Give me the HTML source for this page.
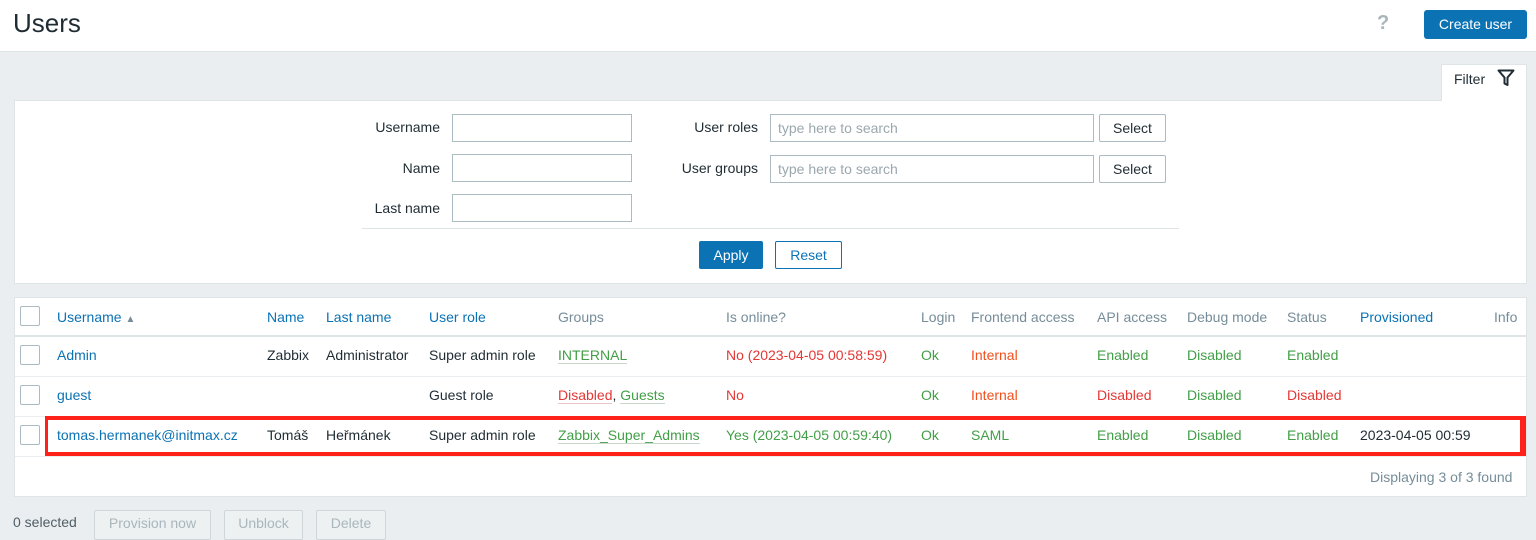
<!DOCTYPE html>
<html><head><meta charset="utf-8"><style>
*{box-sizing:border-box;margin:0;padding:0}
body{width:1536px;height:534px;background:#ebeef0;font-family:"Liberation Sans",sans-serif;font-size:14px;color:#1f2c33;position:relative;overflow:hidden}
.a{position:absolute;white-space:nowrap}
.hdr{left:0;top:0;width:1536px;height:52px;background:#fff;border-bottom:1px solid #dfe4e7}
.box{background:#fff;border:1px solid #dfe4e7}
.inp{background:#fff;border:1px solid #acbbc2;height:28px}
.ph{color:#9aa7ad;font-size:14px;line-height:26px;padding-left:7px}
.btn{border:1px solid #acbbc2;background:#fff;text-align:center;line-height:26px;height:28px;border-radius:2px}
.blue{color:#0b72b4}.gr{color:#429e47}.rd{color:#e33734}.gy{color:#768d99}
.cb{width:20px;height:20px;border:1px solid #acbbc2;border-radius:2px;background:#fff}
.ln{height:1px;background:#ebeef0}
.u{border-bottom:1px solid #c9d7cc}
.ur{border-bottom:1px solid #e8c8c8}
.lbl{text-align:right;width:120px}
.dis{border:1px solid #cfd6da;color:#a9b6bc;background:#eef1f2;height:26px;line-height:24px;text-align:center;border-radius:2px}
</style></head><body>
<div class="a hdr"></div>
<div class="a" style="left:13px;top:8px;font-size:26px;color:#1f2c33">Users</div>
<div class="a" style="left:1377px;top:12px;font-size:20px;color:#a9b6bc;font-weight:bold">?</div>
<div class="a" style="left:1424px;top:10px;width:103px;height:29px;background:#0b72b4;color:#fff;border-radius:3px;text-align:center;line-height:29px;font-size:14px">Create user</div>

<div class="a box" style="left:1441px;top:64px;width:86px;height:38px;border-bottom:none"></div>
<div class="a" style="left:1454px;top:71px;font-size:14px">Filter</div>
<svg class="a" style="left:1497px;top:69px" width="18" height="18" viewBox="0 0 18 18"><path d="M1.5 1.5h15l-6 7v7.5l-3-1.5v-6z" fill="none" stroke="#1f2c33" stroke-width="2" stroke-linejoin="round"/></svg>

<div class="a box" style="left:14px;top:100px;width:1513px;height:184px"></div>
<div class="a" style="left:1442px;top:100px;width:84px;height:2px;background:#fff"></div>
<div class="a lbl" style="left:320px;top:119px">Username</div>
<div class="a lbl" style="left:320px;top:160px">Name</div>
<div class="a lbl" style="left:320px;top:200px">Last name</div>
<div class="a inp" style="left:452px;top:114px;width:180px"></div>
<div class="a inp" style="left:452px;top:154px;width:180px"></div>
<div class="a inp" style="left:452px;top:194px;width:180px"></div>
<div class="a lbl" style="left:638px;top:119px">User roles</div>
<div class="a lbl" style="left:638px;top:160px">User groups</div>
<div class="a inp ph" style="left:770px;top:114px;width:324px">type here to search</div>
<div class="a inp ph" style="left:770px;top:155px;width:324px">type here to search</div>
<div class="a btn" style="left:1099px;top:114px;width:67px">Select</div>
<div class="a btn" style="left:1099px;top:155px;width:67px">Select</div>
<div class="a" style="left:362px;top:228px;width:817px;height:1px;background:#dfe4e7"></div>
<div class="a" style="left:699px;top:241px;width:64px;height:28px;background:#0b72b4;color:#fff;text-align:center;line-height:28px;border-radius:2px">Apply</div>
<div class="a btn blue" style="left:775px;top:241px;width:67px;border:1px solid #0b72b4">Reset</div>

<div class="a box" style="left:14px;top:297px;width:1513px;height:200px"></div>
<div class="a ln" style="left:15px;top:335px;width:1511px;height:2px;background:#dfe4e7"></div>
<div class="a ln" style="left:15px;top:376px;width:1511px"></div>
<div class="a ln" style="left:15px;top:416px;width:1511px"></div>
<div class="a ln" style="left:15px;top:456px;width:1511px"></div>

<div class="a cb" style="left:20px;top:306px"></div>
<div class="a cb" style="left:20px;top:345px"></div>
<div class="a cb" style="left:20px;top:385px"></div>
<div class="a cb" style="left:20px;top:425px"></div>

<div class="a blue" style="left:57px;top:309px">Username <span style="color:#768d99;font-size:10px">▲</span></div>
<div class="a blue" style="left:267px;top:309px">Name</div>
<div class="a blue" style="left:326px;top:309px">Last name</div>
<div class="a blue" style="left:429px;top:309px">User role</div>
<div class="a gy" style="left:558px;top:309px">Groups</div>
<div class="a gy" style="left:726px;top:309px">Is online?</div>
<div class="a gy" style="left:921px;top:309px">Login</div>
<div class="a gy" style="left:971px;top:309px">Frontend access</div>
<div class="a gy" style="left:1097px;top:309px">API access</div>
<div class="a gy" style="left:1187px;top:309px">Debug mode</div>
<div class="a gy" style="left:1287px;top:309px">Status</div>
<div class="a blue" style="left:1360px;top:309px">Provisioned</div>
<div class="a gy" style="left:1494px;top:309px">Info</div>

<div class="a blue" style="left:57px;top:347px">Admin</div>
<div class="a" style="left:267px;top:347px">Zabbix</div>
<div class="a" style="left:326px;top:347px">Administrator</div>
<div class="a" style="left:429px;top:347px">Super admin role</div>
<div class="a gr u" style="left:558px;top:347px">INTERNAL</div>
<div class="a rd" style="left:726px;top:347px">No (2023-04-05 00:58:59)</div>
<div class="a gr" style="left:921px;top:347px">Ok</div>
<div class="a rd" style="left:971px;top:347px;color:#f24f1d">Internal</div>
<div class="a gr" style="left:1097px;top:347px">Enabled</div>
<div class="a gr" style="left:1187px;top:347px">Disabled</div>
<div class="a gr" style="left:1287px;top:347px">Enabled</div>

<div class="a blue" style="left:57px;top:387px">guest</div>
<div class="a" style="left:429px;top:387px">Guest role</div>
<div class="a" style="left:558px;top:387px"><span class="rd ur">Disabled</span>, <span class="gr u">Guests</span></div>
<div class="a rd" style="left:726px;top:387px">No</div>
<div class="a gr" style="left:921px;top:387px">Ok</div>
<div class="a rd" style="left:971px;top:387px;color:#f24f1d">Internal</div>
<div class="a rd" style="left:1097px;top:387px">Disabled</div>
<div class="a gr" style="left:1187px;top:387px">Disabled</div>
<div class="a rd" style="left:1287px;top:387px">Disabled</div>

<div class="a blue" style="left:57px;top:427px">tomas.hermanek@initmax.cz</div>
<div class="a" style="left:267px;top:427px">Tomáš</div>
<div class="a" style="left:326px;top:427px">Heřmánek</div>
<div class="a" style="left:429px;top:427px">Super admin role</div>
<div class="a gr u" style="left:558px;top:427px">Zabbix_Super_Admins</div>
<div class="a gr" style="left:726px;top:427px">Yes (2023-04-05 00:59:40)</div>
<div class="a gr" style="left:921px;top:427px">Ok</div>
<div class="a gr" style="left:971px;top:427px">SAML</div>
<div class="a gr" style="left:1097px;top:427px">Enabled</div>
<div class="a gr" style="left:1187px;top:427px">Disabled</div>
<div class="a gr" style="left:1287px;top:427px">Enabled</div>
<div class="a" style="left:1360px;top:427px">2023-04-05 00:59</div>

<div class="a" style="left:45px;top:416px;width:1481px;height:40px;border:4px solid #fe2119;border-left-width:3px;border-right-width:6px"></div>

<div class="a gy" style="left:1370px;top:469px">Displaying 3 of 3 found</div>

<div class="a gy" style="left:13px;top:514px;color:#4f5f66">0 selected</div>
<div class="a dis" style="left:94px;top:510px;width:117px;height:30px">Provision now</div>
<div class="a dis" style="left:224px;top:510px;width:79px;height:30px">Unblock</div>
<div class="a dis" style="left:316px;top:510px;width:70px;height:30px">Delete</div>
</body></html>
